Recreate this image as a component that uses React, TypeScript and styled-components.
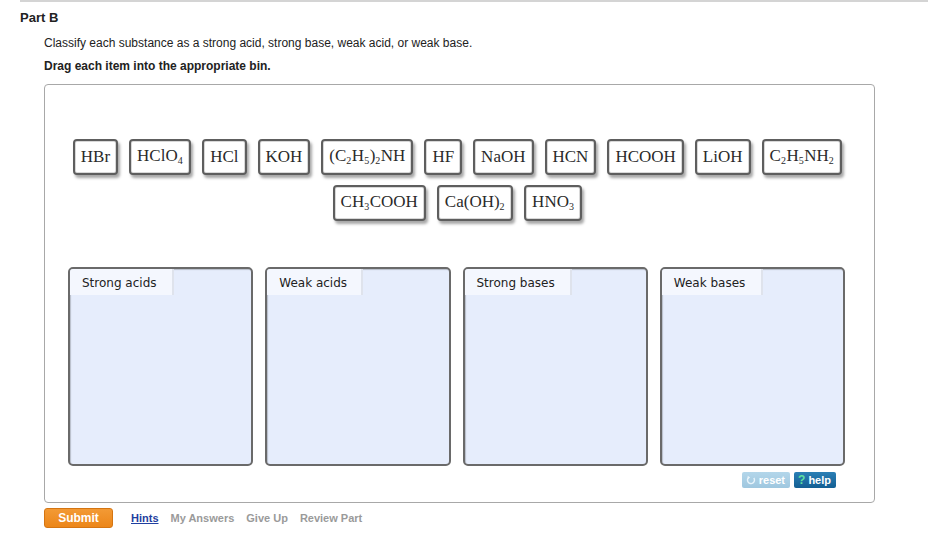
import React from "react";
import styled, { createGlobalStyle } from "styled-components";

const Global = createGlobalStyle`
  html, body { margin: 0; padding: 0; background: #fff; }
  body { font-family: "Liberation Sans", Arial, sans-serif; color: #222; }
`;

const Page = styled.div`
  width: 928px;
  height: 554px;
  box-sizing: border-box;
  padding-left: 20px;
  overflow: hidden;
`;

const TopRule = styled.div`
  height: 2px;
  background: #d4d4d4;
`;

const Title = styled.div`
  font-weight: bold;
  font-size: 13px;
  margin-top: 8px;
  line-height: 16px;
`;

const Content = styled.div`
  padding-left: 24px;
`;

const Instruction = styled.div<{ $bold?: boolean }>`
  font-size: 12px;
  line-height: 15px;
  font-weight: ${(p) => (p.$bold ? "bold" : "normal")};
  margin-top: ${(p) => (p.$bold ? "8px" : "10px")};
  color: #222;
`;

const Board = styled.div`
  margin-top: 10px;
  width: 831px;
  height: 419px;
  box-sizing: border-box;
  border: 1px solid #a8a8a8;
  border-radius: 4px;
  padding: 54px 29px 0 23px;
`;

const TileRow = styled.div`
  display: flex;
  justify-content: center;
  gap: 11px;
  padding-left: 2px;
  margin-bottom: 10px;
`;

const Tile = styled.div`
  height: 36px;
  box-sizing: border-box;
  border: 2px solid #5e5e5e;
  border-radius: 4px;
  background: #fff;
  box-shadow: inset 0 0 0 1px #d8d8d8, 2px 3px 3px rgba(0, 0, 0, 0.35);
  padding: 0 6px;
  display: flex;
  align-items: center;
  font-family: "Liberation Serif", "Times New Roman", serif;
  font-size: 17px;
  color: #2a2a2a;
  white-space: nowrap;
`;

const Formula = styled.span`
  display: inline-block;
  line-height: 20px;
`;

const Sub = styled.span`
  font-size: 10px;
  position: relative;
  top: 3px;
  margin-right: 0.5px;
`;

const Bins = styled.div`
  display: flex;
  gap: 12px;
  margin-top: 46px;
`;

const Bin = styled.div`
  width: 186px;
  height: 199px;
  box-sizing: border-box;
  border: 2px solid #6a6a6a;
  border-radius: 5px;
  background: #e6edfc;
  box-shadow: inset 1px 1px 1px rgba(0, 0, 0, 0.2);
`;

const BinLabel = styled.div<{ $w: number }>`
  width: ${(p) => p.$w}px;
  height: 26px;
  box-sizing: border-box;
  padding-left: 12px;
  padding-top: 2px;
  background: #f4f7fe;
  border-right: 2px solid #dfe3ec;
  border-top-left-radius: 3px;
  font-family: "DejaVu Sans", Verdana, sans-serif;
  font-size: 12px;
  line-height: 24px;
  color: #222;
`;

const Controls = styled.div`
  display: flex;
  justify-content: flex-end;
  gap: 4px;
  margin-top: 6px;
  padding-right: 9px;
`;

const CtlButton = styled.div<{ $kind: "reset" | "help" }>`
  height: 16px;
  box-sizing: border-box;
  padding: 0 5px 0 4px;
  display: flex;
  align-items: center;
  gap: 3px;
  font-family: "Liberation Sans", Arial, sans-serif;
  font-weight: bold;
  font-size: 11px;
  color: #fff;
  background: ${(p) =>
    p.$kind === "reset"
      ? "linear-gradient(#b3d6ea, #9fc7df)"
      : "linear-gradient(#2b7fb5, #135f93)"};
  border-radius: 2px;
`;

const HelpMark = styled.span`
  color: #5fe0a0;
  font-size: 12px;
`;

const Footer = styled.div`
  display: flex;
  align-items: center;
  margin-top: 5px;
  gap: 18px;
`;

const Submit = styled.div`
  width: 69px;
  height: 20px;
  box-sizing: border-box;
  border: 1px solid #d57512;
  border-radius: 3px;
  background: linear-gradient(#f39a35, #ec8619);
  color: #fff;
  font-weight: bold;
  font-size: 12px;
  line-height: 18px;
  text-align: center;
`;

const Links = styled.div`
  display: flex;
  gap: 12px;
  font-size: 11px;
  font-weight: bold;
`;

const Link = styled.span<{ $active?: boolean }>`
  color: ${(p) => (p.$active ? "#1f3fa0" : "#9a9a9a")};
  text-decoration: ${(p) => (p.$active ? "underline" : "none")};
`;

const row1: React.ReactNode[] = [
  "HBr",
  <>HClO<Sub>4</Sub></>,
  "HCl",
  "KOH",
  <>(C<Sub>2</Sub>H<Sub>5</Sub>)<Sub>2</Sub>NH</>,
  "HF",
  "NaOH",
  "HCN",
  "HCOOH",
  "LiOH",
  <>C<Sub>2</Sub>H<Sub>5</Sub>NH<Sub>2</Sub></>,
];

const row2: React.ReactNode[] = [
  <>CH<Sub>3</Sub>COOH</>,
  <>Ca(OH)<Sub>2</Sub></>,
  <>HNO<Sub>3</Sub></>,
];

const bins: [string, number][] = [
  ["Strong acids", 104],
  ["Weak acids", 96],
  ["Strong bases", 107],
  ["Weak bases", 101],
];

export default function App() {
  return (
    <Page>
      <Global />
      <TopRule />
      <Title>Part B</Title>
      <Content>
        <Instruction>
          Classify each substance as a strong acid, strong base, weak acid, or weak base.
        </Instruction>
        <Instruction $bold>Drag each item into the appropriate bin.</Instruction>
        <Board>
          <TileRow>
            {row1.map((t, i) => (
              <Tile key={i}>
                <Formula>{t}</Formula>
              </Tile>
            ))}
          </TileRow>
          <TileRow>
            {row2.map((t, i) => (
              <Tile key={i}>
                <Formula>{t}</Formula>
              </Tile>
            ))}
          </TileRow>
          <Bins>
            {bins.map(([name, w]) => (
              <Bin key={name}>
                <BinLabel $w={w}>{name}</BinLabel>
              </Bin>
            ))}
          </Bins>
          <Controls>
            <CtlButton $kind="reset">
              <svg width="10" height="10" viewBox="0 0 10 10">
                <path d="M3 2.2 A3.5 3.5 0 1 0 7.8 3" fill="none" stroke="#e8f4fb" strokeWidth="1.4" />
                <path d="M1.6 0.8 L4.2 2.4 L1.8 4.2 Z" fill="#e8f4fb" />
              </svg>
              reset
            </CtlButton>
            <CtlButton $kind="help">
              <HelpMark>?</HelpMark> help
            </CtlButton>
          </Controls>
        </Board>
        <Footer>
          <Submit>Submit</Submit>
          <Links>
            <Link $active>Hints</Link>
            <Link>My Answers</Link>
            <Link>Give Up</Link>
            <Link>Review Part</Link>
          </Links>
        </Footer>
      </Content>
    </Page>
  );
}
